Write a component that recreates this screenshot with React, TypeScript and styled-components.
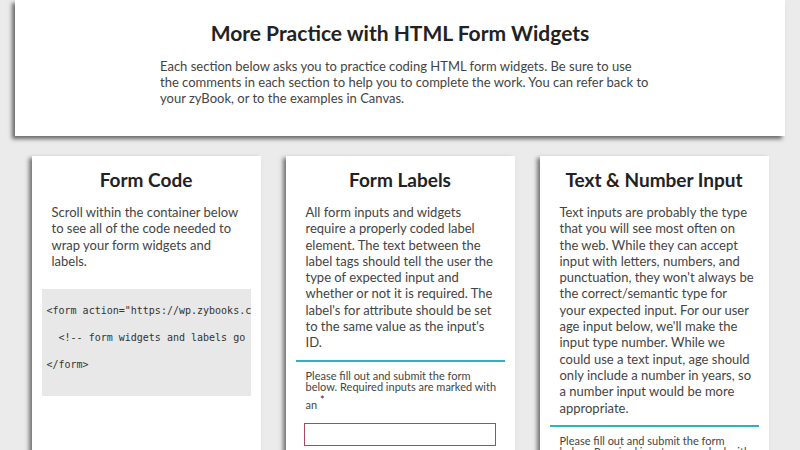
import styled, { createGlobalStyle } from "styled-components";

const GlobalStyle = createGlobalStyle`
  html, body {
    margin: 0;
    padding: 0;
    background-color: #ebebeb;
    font-family: "Lato", "Open Sans", sans-serif;
    color: #333;
  }
`;

const codeSample = `<form action="https://wp.zybooks.com/form-viewer.php" method="POST">

  <!-- form widgets and labels go here -->

</form>`;

const introLines = [
  "Each section below asks you to practice coding HTML form widgets. Be sure to use",
  "the comments in each section to help you to complete the work. You can refer back to",
  "your zyBook, or to the examples in Canvas.",
];

const codeLines = [
  "Scroll within the container below",
  "to see all of the code needed to",
  "wrap your form widgets and",
  "labels.",
];

const labelLines = [
  "All form inputs and widgets",
  "require a properly coded label",
  "element. The text between the",
  "label tags should tell the user the",
  "type of expected input and",
  "whether or not it is required. The",
  "label's for attribute should be set",
  "to the same value as the input's",
  "ID.",
];

const inputLines = [
  "Text inputs are probably the type",
  "that you will see most often on",
  "the web. While they can accept",
  "input with letters, numbers, and",
  "punctuation, they won't always be",
  "the correct/semantic type for",
  "your expected input. For our user",
  "age input below, we'll make the",
  "input type number. While we",
  "could use a text input, age should",
  "only include a number in years, so",
  "a number input would be more",
  "appropriate.",
];

const Lines = ({ lines }: { lines: string[] }) => (
  <>
    {lines.map((line) => (
      <Line key={line}>{line}</Line>
    ))}
  </>
);

const RequiredNote = () => (
  <FormNote>
    <Line>Please fill out and submit the form</Line>
    <Line>below. Required inputs are marked with</Line>
    <NoteTail>
      an <Required>*</Required>
    </NoteTail>
  </FormNote>
);

export default function App() {
  return (
    <>
      <GlobalStyle />
      <Header>
        <PageTitle>More Practice with HTML Form Widgets</PageTitle>
        <Intro>
          <Lines lines={introLines} />
        </Intro>
      </Header>
      <Cards>
        <Card>
          <CardTitle>Form Code</CardTitle>
          <CardText>
            <Lines lines={codeLines} />
          </CardText>
          <CodeBlock>{codeSample}</CodeBlock>
        </Card>
        <Card>
          <CardTitle>Form Labels</CardTitle>
          <CardText>
            <Lines lines={labelLines} />
          </CardText>
          <Divider />
          <RequiredNote />
          <TextBox type="text" />
        </Card>
        <Card>
          <CardTitle>Text &amp; Number Input</CardTitle>
          <CardText>
            <Lines lines={inputLines} />
          </CardText>
          <Divider />
          <RequiredNote />
          <TextBox type="number" />
        </Card>
      </Cards>
    </>
  );
}

const Line = styled.span`
  display: block;
  white-space: nowrap;
`;

const NoteTail = styled(Line)`
  padding-top: 2px;
`;

const Header = styled.header`
  margin: 0 15px;
  padding: 20px 0 30px;
  background-color: #fff;
  box-shadow: -3px 3px 4px rgba(0, 0, 0, 0.55);
`;

const PageTitle = styled.h1`
  margin: 0 0 13px;
  text-align: center;
  font-size: 21px;
  font-weight: 700;
  color: #222;
`;

const Intro = styled.p`
  width: 480px;
  margin: 0 auto;
  font-size: 13px;
  line-height: 16px;
  color: #444;
`;

const Cards = styled.main`
  display: flex;
  justify-content: center;
  align-items: flex-start;
  gap: 25px;
  margin-top: 20px;
`;

const Card = styled.section`
  width: 229px;
  min-height: 320px;
  background-color: #fff;
  box-shadow: -3px 2px 4px rgba(0, 0, 0, 0.5);
  padding-top: 12px;
`;

const CardTitle = styled.h2`
  margin: 0 0 13px;
  text-align: center;
  font-size: 19px;
  font-weight: 700;
  color: #222;
`;

const CardText = styled.p`
  margin: 0 0 20px;
  padding: 0 12px 0 20px;
  font-size: 13px;
  line-height: 16.3px;
  color: #444;
`;

const CodeBlock = styled.pre`
  margin: 0 10px;
  height: 107px;
  box-sizing: border-box;
  padding: 15px 5px 0;
  overflow: hidden;
  background-color: #e8e8e8;
  font-family: "DejaVu Sans Mono", monospace;
  font-size: 10px;
  line-height: 13.5px;
  color: #333;
`;

const Divider = styled.hr`
  margin: -11px 10px 0;
  border: none;
  border-top: 2px solid #2bb3be;
`;

const FormNote = styled.p`
  margin: 8px 0 14px;
  padding: 0 8px 0 20px;
  font-size: 11px;
  line-height: 11px;
  color: #444;
`;

const Required = styled.sup`
  color: #5a1446;
  font-size: 11px;
`;

const TextBox = styled.input`
  display: block;
  box-sizing: border-box;
  width: 192px;
  height: 23px;
  margin: 0 18px;
  border: 1px solid #a84a5c;
  background: #fff;
`;
